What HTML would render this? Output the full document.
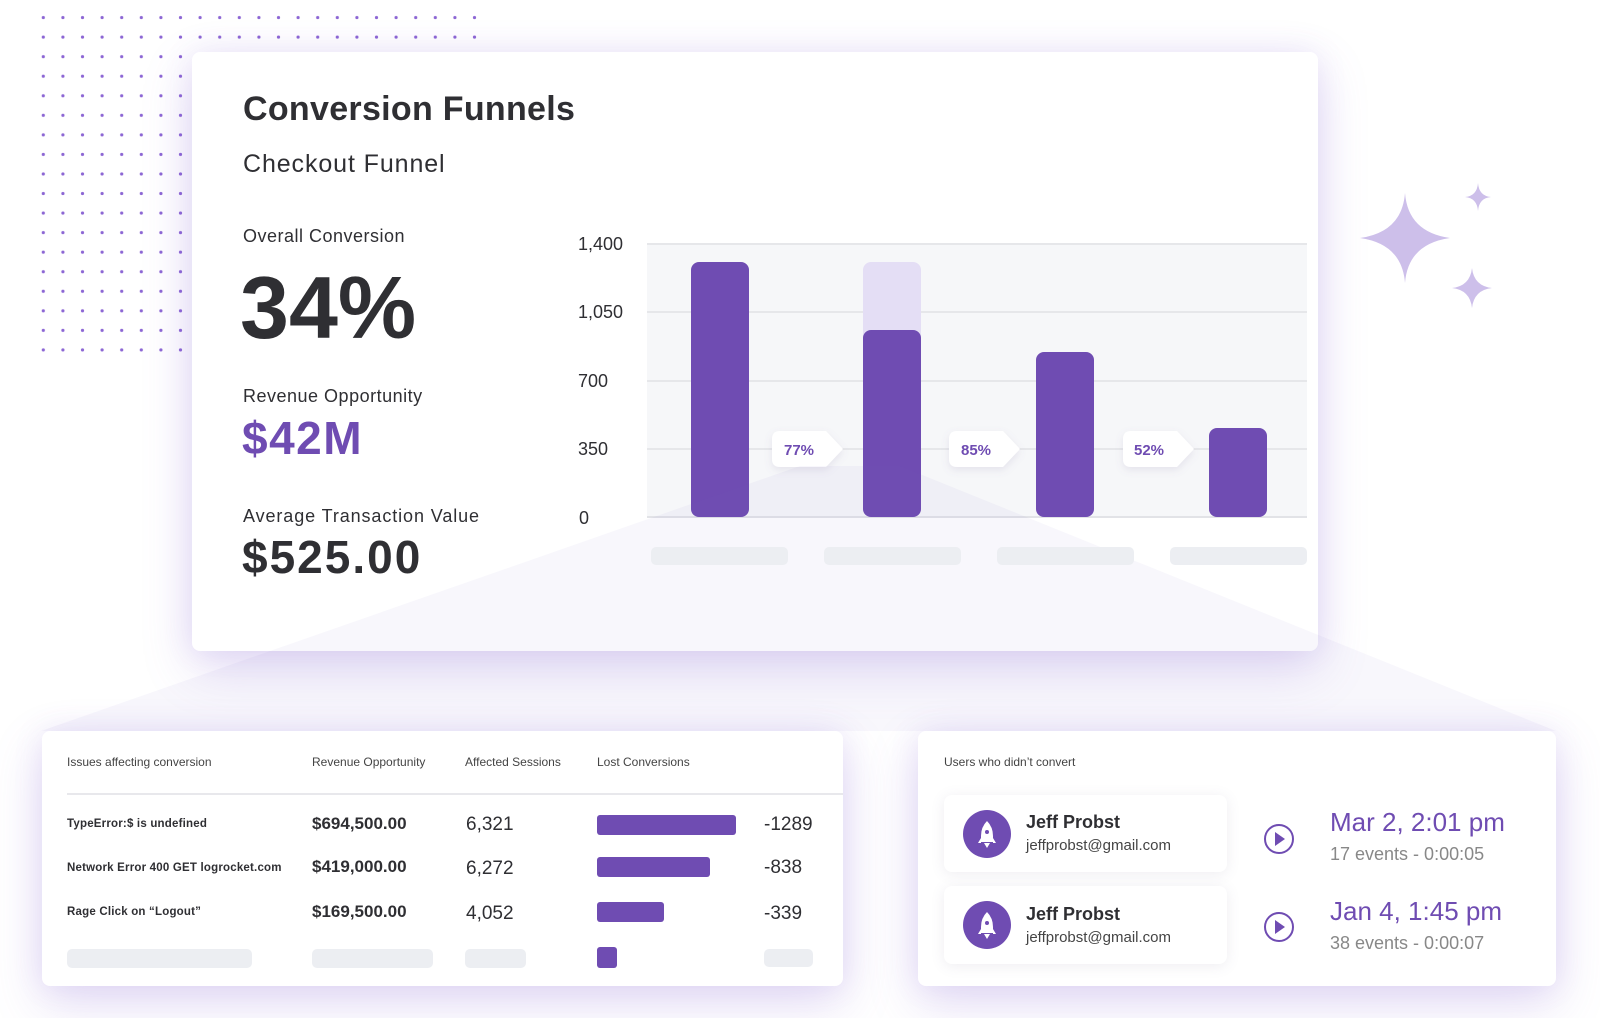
<!DOCTYPE html>
<html><head><meta charset="utf-8"><style>
*{margin:0;padding:0;box-sizing:border-box}
body{width:1600px;height:1018px;background:#fff;position:relative;overflow:hidden;font-family:"Liberation Sans",sans-serif;color:#2f2f33}
.abs{position:absolute}
.card{position:absolute;background:#fff;border-radius:8px;box-shadow:0 18px 50px rgba(130,95,210,.22),0 0 30px rgba(130,95,210,.12)}
.t{position:absolute;white-space:nowrap;line-height:1}
.ph{position:absolute;background:#eceef2;border-radius:5px}
.bar{position:absolute;background:#6f4cb2;border-radius:8px}
.hb{position:absolute;background:#6f4cb2;border-radius:3px;height:20px;left:597px}
.lab{letter-spacing:.5px}
</style></head><body>
<svg class="abs" style="left:0;top:0" width="1600" height="1018">
<g fill="#cdbfea">
<path d="M1405 193 Q1408 232 1450 238 Q1408 244 1405 283 Q1402 244 1360 238 Q1402 232 1405 193Z"/>
<path d="M1478 183 Q1479 196 1491 197 Q1479 198 1478 211 Q1477 198 1465 197 Q1477 196 1478 183Z"/>
<path d="M1472 268 Q1474 286 1492 288 Q1474 290 1472 308 Q1470 290 1452 288 Q1470 286 1472 268Z"/>
</g>
</svg>

<div class="card" style="left:192px;top:52px;width:1126px;height:599px"></div>

<div class="t" style="left:243px;top:92px;font-size:34px;font-weight:bold;color:#2f2f33;letter-spacing:.3px">Conversion Funnels</div>
<div class="t" style="left:243px;top:152px;font-size:25px;letter-spacing:.9px">Checkout Funnel</div>
<div class="t lab" style="left:243px;top:227px;font-size:18px">Overall Conversion</div>
<div class="t" style="left:240px;top:264px;font-size:88px;font-weight:bold;letter-spacing:0">34%</div>
<div class="t lab" style="left:243px;top:387px;font-size:18px">Revenue Opportunity</div>
<div class="t" style="left:242px;top:415px;font-size:46px;font-weight:bold;color:#6f4cb2;letter-spacing:1.5px">$42M</div>
<div class="t" style="left:243px;top:507px;font-size:18px;letter-spacing:.9px">Average Transaction Value</div>
<div class="t" style="left:242px;top:534px;font-size:46px;font-weight:bold;letter-spacing:2px">$525.00</div>

<div class="abs" style="left:647px;top:243px;width:660px;height:274px;background:#f6f7f9"></div>
<div class="abs" style="left:647px;top:243px;width:660px;height:2px;background:#e6e7ea"></div>
<div class="abs" style="left:647px;top:311px;width:660px;height:2px;background:#e6e7ea"></div>
<div class="abs" style="left:647px;top:380px;width:660px;height:2px;background:#e6e7ea"></div>
<div class="abs" style="left:647px;top:448px;width:660px;height:2px;background:#e6e7ea"></div>
<div class="abs" style="left:647px;top:516px;width:660px;height:2px;background:#e2e3e7"></div>
<div class="t" style="left:578px;top:235px;font-size:18px">1,400</div>
<div class="t" style="left:578px;top:303px;font-size:18px">1,050</div>
<div class="t" style="left:578px;top:372px;font-size:18px">700</div>
<div class="t" style="left:578px;top:440px;font-size:18px">350</div>
<div class="t" style="left:579px;top:509px;font-size:18px">0</div>

<div class="bar" style="left:691px;top:262px;width:58px;height:255px"></div>
<div class="bar" style="left:863px;top:262px;width:58px;height:255px;background:#e4def5"></div>
<div class="bar" style="left:863px;top:330px;width:58px;height:187px"></div>
<div class="bar" style="left:1036px;top:352px;width:58px;height:165px"></div>
<div class="bar" style="left:1209px;top:428px;width:58px;height:89px"></div>

<svg class="abs" style="left:0;top:0" width="1600" height="1018">
<defs><filter id="sh" x="-30%" y="-30%" width="160%" height="180%"><feDropShadow dx="0" dy="3" stdDeviation="4" flood-color="#8070a0" flood-opacity=".15"/></filter></defs>
<g fill="#fff" filter="url(#sh)">
<path d="M780 431 H826 L843 449 L826 467 H780 Q772 467 772 459 V439 Q772 431 780 431Z"/>
<path d="M957 431 H1003 L1020 449 L1003 467 H957 Q949 467 949 459 V439 Q949 431 957 431Z"/>
<path d="M1131 431 H1177 L1194 449 L1177 467 H1131 Q1123 467 1123 459 V439 Q1123 431 1131 431Z"/>
</g>
<g font-family="Liberation Sans" font-weight="bold" font-size="15" fill="#6f4cb2">
<text x="784" y="455">77%</text><text x="961" y="455">85%</text><text x="1134" y="455">52%</text>
</g>
<polygon points="41,731 800,466 900,466 1556,731" fill="#7a5cc8" fill-opacity=".05"/>
</svg>

<div class="ph" style="left:651px;top:547px;width:137px;height:18px"></div>
<div class="ph" style="left:824px;top:547px;width:137px;height:18px"></div>
<div class="ph" style="left:997px;top:547px;width:137px;height:18px"></div>
<div class="ph" style="left:1170px;top:547px;width:137px;height:18px"></div>

<!-- bottom left -->
<div class="card" style="left:42px;top:731px;width:801px;height:255px"></div>
<div class="t" style="left:67px;top:756px;font-size:12px;color:#444">Issues affecting conversion</div>
<div class="t" style="left:312px;top:756px;font-size:12px;color:#444">Revenue Opportunity</div>
<div class="t" style="left:465px;top:756px;font-size:12px;color:#444">Affected Sessions</div>
<div class="t" style="left:597px;top:756px;font-size:12px;color:#444">Lost Conversions</div>
<div class="abs" style="left:67px;top:793px;width:776px;height:2px;background:#e8e8ec"></div>

<div class="t" style="left:67px;top:819px;font-size:11.5px;font-weight:bold;letter-spacing:.2px">TypeError:$ is undefined</div>
<div class="t" style="left:312px;top:815px;font-size:17px;font-weight:bold">$694,500.00</div>
<div class="t" style="left:466px;top:815px;font-size:19px">6,321</div>
<div class="hb" style="top:815px;width:139px"></div>
<div class="t" style="left:764px;top:815px;font-size:19px">-1289</div>

<div class="t" style="left:67px;top:863px;font-size:11.5px;font-weight:bold;letter-spacing:.2px">Network Error 400 GET logrocket.com</div>
<div class="t" style="left:312px;top:858px;font-size:17px;font-weight:bold">$419,000.00</div>
<div class="t" style="left:466px;top:859px;font-size:19px">6,272</div>
<div class="hb" style="top:857px;width:113px"></div>
<div class="t" style="left:764px;top:858px;font-size:19px">-838</div>

<div class="t" style="left:67px;top:907px;font-size:11.5px;font-weight:bold;letter-spacing:.2px">Rage Click on “Logout”</div>
<div class="t" style="left:312px;top:903px;font-size:17px;font-weight:bold">$169,500.00</div>
<div class="t" style="left:466px;top:904px;font-size:19px">4,052</div>
<div class="hb" style="top:902px;width:67px"></div>
<div class="t" style="left:764px;top:904px;font-size:19px">-339</div>

<div class="ph" style="left:67px;top:949px;width:185px;height:19px"></div>
<div class="ph" style="left:312px;top:949px;width:121px;height:19px"></div>
<div class="ph" style="left:465px;top:949px;width:61px;height:19px"></div>
<div class="hb" style="top:947px;width:20px;height:21px"></div>
<div class="ph" style="left:764px;top:949px;width:49px;height:18px"></div>

<!-- bottom right -->
<div class="card" style="left:918px;top:731px;width:638px;height:255px"></div>
<div class="t" style="left:944px;top:756px;font-size:12px;color:#444">Users who didn’t convert</div>

<div class="abs" style="left:944px;top:795px;width:283px;height:77px;background:#fff;border-radius:8px;box-shadow:0 2px 14px rgba(90,80,120,.10)"></div>
<div class="abs" style="left:944px;top:886px;width:283px;height:78px;background:#fff;border-radius:8px;box-shadow:0 2px 14px rgba(90,80,120,.10)"></div>
<svg class="abs" style="left:0;top:0" width="1600" height="1018">
<g id="av">
<circle cx="987" cy="834" r="24" fill="#6f4cb2"/>
<path d="M987 821 Q993 827 993 836 L993 842 H981 L981 836 Q981 827 987 821Z" fill="#fff"/>
<circle cx="987" cy="832" r="2" fill="#6f4cb2"/>
<path d="M981 838 L978 843 L981 843Z M993 838 L996 843 L993 843Z M984 843 H990 L987 848Z" fill="#fff"/>
</g>
<use href="#av" y="91"/>
<g fill="none" stroke="#6f4cb2" stroke-width="2"><circle cx="1279" cy="839" r="14"/><circle cx="1279" cy="927" r="14"/></g>
<path d="M1275 832 L1285 839 L1275 846Z M1275 920 L1285 927 L1275 934Z" fill="#6f4cb2"/>
</svg>
<div class="t" style="left:1026px;top:813px;font-size:18px;font-weight:bold">Jeff Probst</div>
<div class="t" style="left:1026px;top:838px;font-size:15px;color:#444">jeffprobst@gmail.com</div>
<div class="t" style="left:1026px;top:905px;font-size:18px;font-weight:bold">Jeff Probst</div>
<div class="t" style="left:1026px;top:930px;font-size:15px;color:#444">jeffprobst@gmail.com</div>
<div class="t" style="left:1330px;top:809px;font-size:26px;color:#6f4cb2">Mar 2, 2:01 pm</div>
<div class="t" style="left:1330px;top:845px;font-size:18px;color:#888">17 events - 0:00:05</div>
<div class="t" style="left:1330px;top:898px;font-size:26px;color:#6f4cb2">Jan 4, 1:45 pm</div>
<div class="t" style="left:1330px;top:934px;font-size:18px;color:#888">38 events - 0:00:07</div>

<svg class="abs" style="left:0;top:0;z-index:-1" width="500" height="370">
<defs><pattern id="dp" x="33.5" y="7.8" width="19.6" height="19.55" patternUnits="userSpaceOnUse"><circle cx="9.8" cy="9.8" r="1.6" fill="#8c66d4"/></pattern></defs>
<rect x="34" y="8" width="450" height="39" fill="url(#dp)"/>
<rect x="34" y="47" width="157" height="312" fill="url(#dp)"/>
</svg>
</body></html>
